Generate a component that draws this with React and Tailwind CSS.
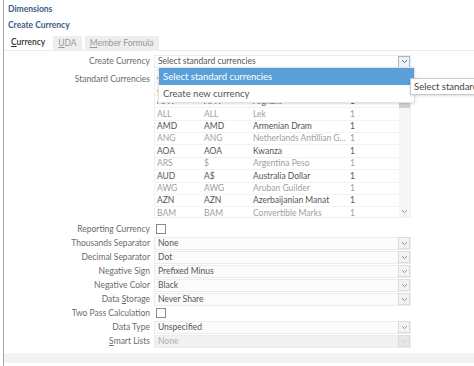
import React from "react";

const currencies = [
  ["AED", "AED", "UAE Dirham", "1"],
  ["AFA", "AFA", "Afghani", "1"],
  ["AFN", "AFN", "Afghani", "1"],
  ["ALL", "ALL", "Lek", "1"],
  ["AMD", "AMD", "Armenian Dram", "1"],
  ["ANG", "ANG", "Netherlands Antillian G...", "1"],
  ["AOA", "AOA", "Kwanza", "1"],
  ["ARS", "$", "Argentina Peso", "1"],
  ["AUD", "A$", "Australia Dollar", "1"],
  ["AWG", "AWG", "Aruban Guilder", "1"],
  ["AZN", "AZN", "Azerbaijanian Manat", "1"],
  ["BAM", "BAM", "Convertible Marks", "1"],
];

const Chevron = ({ className = "" }) => (
  <svg width="7" height="5" viewBox="0 0 7 5" className={className}>
    <path d="M1 1.2 L3.5 3.6 L6 1.2" fill="none" stroke="currentColor" strokeWidth="0.9" />
  </svg>
);

const Label = ({ children }) => (
  <div className="w-[150px] shrink-0 pr-[4px] text-right text-[#6b6b6b]">{children}</div>
);

const SelectBox = ({ value, disabled }) => (
  <div
    className={`flex h-[13px] w-[257px] items-center border border-[#ececec] ${
      disabled ? "bg-[#f1f1f1] text-[#b0b0b0]" : "bg-[#fbfbfb] text-[#555]"
    }`}
  >
    <span className="flex-1 pl-[3px]">{value}</span>
    <span
      className={`flex h-[12px] w-[12px] items-center justify-center border border-[#dcdcdc] ${
        disabled ? "bg-[#e6e6e6] text-[#cfcfcf]" : "bg-[#f3f3f3] text-[#888]"
      }`}
    >
      <Chevron />
    </span>
  </div>
);

const Checkbox = () => (
  <div className="ml-[2px] h-[10px] w-[10px] border border-[#8a8a8a] bg-white" />
);

const FormRow = ({ label, children }) => (
  <div className="flex h-[14px] items-center">
    <Label>{label}</Label>
    {children}
  </div>
);

export default function App() {
  return (
    <div
      className="relative h-[366px] w-[474px] overflow-hidden bg-white text-[8.5px] leading-none"
      style={{ fontFamily: "Lato, 'Noto Sans', sans-serif" }}
    >
      <div className="flex h-full">
        <div className="w-[3px] shrink-0 bg-white" />
        <div className="w-[1px] shrink-0 bg-[#9ea7b3]" />
        <div className="flex flex-1 flex-col">
          {/* Header */}
          <div className="pl-[4px] pt-[5px] font-bold text-[#3b5d83]">Dimensions</div>
          <div className="pl-[4px] pt-[7px] font-bold text-[#3b5d83]">Create Currency</div>

          {/* Tabs */}
          <div className="mt-[7px] flex h-[15px] items-end gap-[3px] border-b border-[#ececec] pl-[2px]">
            <div className="flex h-[15px] items-center bg-white px-[5px] font-semibold text-[#333]">
              <span><u>C</u>urrency</span>
            </div>
            <div className="flex h-[14px] items-center bg-[#eeeeee] px-[5px] text-[#999]">
              <span><u>U</u>DA</span>
            </div>
            <div className="flex h-[14px] items-center bg-[#eeeeee] px-[5px] text-[#999]">
              <span><u>M</u>ember Formula</span>
            </div>
          </div>

          {/* Form */}
          <div className="relative flex flex-1 flex-col pt-[4px]">
            <div className="flex h-[13px] items-center">
              <Label>Create Currency</Label>
              <div className="flex h-[13px] w-[257px] items-center border border-[#ececec] bg-white text-[#555]">
                <span className="flex-1 pl-[3px]">Select standard currencies</span>
                <span className="flex h-[12px] w-[12px] items-center justify-center border border-[#9db7d3] bg-[#eef4fa] text-[#555]">
                  <Chevron />
                </span>
              </div>
            </div>

            <div className="mt-[2px] flex">
              <Label>
                <div className="pt-[5px]">Standard Currencies</div>
              </Label>
              <div className="relative h-[148px] w-[257px] overflow-hidden border border-[#f0f0f0]">
                <div className="flex h-full">
                  <div className="flex-1">
                    {currencies.map((c, i) => (
                      <div
                        key={c[0]}
                        className={`flex h-[12.4px] items-center border-b border-[#f3f3f3] ${
                          i % 2 === 0 ? "text-[#555]" : "text-[#a0a0a0]"
                        }`}
                      >
                        <span className="w-[49px] pl-[2px]">{c[0]}</span>
                        <span className="w-[49px]">{c[1]}</span>
                        <span className="w-[95px]">{c[2]}</span>
                        <span className="pl-[2px]">{c[3]}</span>
                      </div>
                    ))}
                  </div>
                  <div className="flex w-[11px] flex-col items-center bg-[#f6f6f6]">
                    <div className="mt-[25px] h-[12px] w-[11px] bg-[#cfcfcf]" />
                    <div className="flex-1" />
                    <div className="mb-[3px] text-[#888]">
                      <Chevron />
                    </div>
                  </div>
                </div>
              </div>
            </div>

            <div className="mt-[4px] flex flex-col">
              <FormRow label="Reporting Currency">
                <Checkbox />
              </FormRow>
              <FormRow label="Thousands Separator">
                <SelectBox value="None" />
              </FormRow>
              <FormRow label="Decimal Separator">
                <SelectBox value="Dot" />
              </FormRow>
              <FormRow label="Negative Sign">
                <SelectBox value="Prefixed Minus" />
              </FormRow>
              <FormRow label="Negative Color">
                <SelectBox value="Black" />
              </FormRow>
              <FormRow label={<span>Data <u>S</u>torage</span>}>
                <SelectBox value="Never Share" />
              </FormRow>
              <FormRow label="Two Pass Calculation">
                <Checkbox />
              </FormRow>
              <FormRow label="Data Type">
                <SelectBox value="Unspecified" />
              </FormRow>
              <FormRow label={<span><u>S</u>mart Lists</span>}>
                <SelectBox value="None" disabled />
              </FormRow>
            </div>

            <div className="mt-[5px] h-[10px] bg-[#f3f3f3]" />

            {/* Dropdown list */}
            <div className="absolute left-[154px] top-[16px] w-[257px] border border-[#e2e2e2] bg-white shadow-sm">
              <div className="flex h-[17px] items-center bg-[#5a9fd8] pl-[4px] text-[9.5px] text-white">
                Select standard currencies
              </div>
              <div className="flex h-[17px] items-center pl-[4px] text-[9.5px] text-[#555]">
                Create new currency
              </div>
            </div>
          </div>
        </div>
      </div>

      {/* Tooltip */}
      <div className="absolute left-[410px] top-[78px] flex h-[17px] w-[80px] items-center border border-[#c8c8c8] bg-white pl-[3px] text-[9.5px] text-[#444] shadow">
        Select standard
      </div>
    </div>
  );
}
